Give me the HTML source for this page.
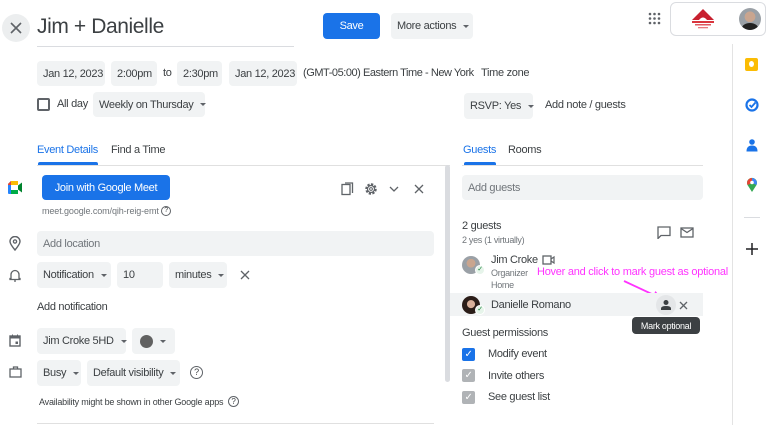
<!DOCTYPE html>
<html><head><meta charset="utf-8"><style>
*{box-sizing:border-box;margin:0;padding:0}
body{width:768px;height:425px;overflow:hidden;background:#fff;font-family:"Liberation Sans",Arial,sans-serif;color:#3c4043;position:relative;letter-spacing:-0.3px}
.a{position:absolute}
.box{position:absolute;background:#f1f3f4;border-radius:4px;font-size:11px;color:#3c4043;display:flex;align-items:center;padding-left:6px;white-space:nowrap}
.car{display:inline-block;width:0;height:0;border-left:3px solid transparent;border-right:3px solid transparent;border-top:3px solid #5f6368;margin-left:7px}
.t{position:absolute;font-size:11px;white-space:nowrap}
.ic{position:absolute}
</style></head><body>
<div class="a" style="left:2px;top:14px;width:28px;height:28px;border-radius:50%;background:#eceeef"></div>
<svg class="ic" style="left:10px;top:22px" width="12" height="12"><path d="M1 1L11 11M11 1L1 11" stroke="#5f6368" stroke-width="1.6"/></svg>
<div class="t" style="left:37px;top:15px;font-size:21px;color:#3c4043;letter-spacing:-0.4px">Jim + Danielle</div>
<div class="a" style="left:37px;top:46px;width:257px;height:1px;background:#dadce0"></div>
<div class="a" style="left:323px;top:13px;width:57px;height:26px;background:#1a73e8;border-radius:4px;color:#fff;font-size:11px;display:flex;align-items:center;justify-content:center">Save</div>
<div class="box" style="left:391px;top:13px;width:82px;height:26px">More actions<span class="car"></span></div>
<svg class="ic" style="left:648px;top:12px" width="13" height="13"><g fill="#5f6368"><circle cx="2" cy="2" r="1.3"/><circle cx="6.5" cy="2" r="1.3"/><circle cx="11" cy="2" r="1.3"/><circle cx="2" cy="6.5" r="1.3"/><circle cx="6.5" cy="6.5" r="1.3"/><circle cx="11" cy="6.5" r="1.3"/><circle cx="2" cy="11" r="1.3"/><circle cx="6.5" cy="11" r="1.3"/><circle cx="11" cy="11" r="1.3"/></g></svg>
<div class="a" style="left:670px;top:2px;width:96px;height:34px;border:1px solid #dadce0;border-radius:6px"></div>
<svg class="ic" style="left:691px;top:8px" width="24" height="24"><path d="M12 1L23 12H1Z" fill="#c8202f"/><path d="M8 12Q12 7 16 12Z" fill="#fff"/><rect x="1" y="13" width="22" height="2" fill="#d9363e"/><rect x="4" y="16" width="16" height="1.5" fill="#e05a60"/><rect x="7" y="19" width="10" height="1.3" fill="#e87a80"/></svg>
<div class="a" style="left:739px;top:8px;width:22px;height:22px;border-radius:50%;background:radial-gradient(circle at 50% 40%,#c9a58f 0 30%,#9aa0a6 32%);overflow:hidden"><div class="a" style="left:3px;top:15px;width:16px;height:10px;border-radius:50%;background:#222"></div></div>
<div class="a" style="left:732px;top:44px;width:1px;height:381px;background:#e3e3e3"></div>
<div class="a" style="left:745px;top:58px;width:13px;height:13px;background:#fbbc04;border-radius:2px"><div class="a" style="left:4px;top:3px;width:5px;height:6px;background:#fff;border-radius:50%"></div></div>
<svg class="ic" style="left:745px;top:98px" width="14" height="14"><circle cx="7" cy="7" r="5.5" fill="none" stroke="#1a73e8" stroke-width="2.2"/><path d="M4.5 7l2 2 4-4.5" fill="none" stroke="#1a73e8" stroke-width="1.8"/></svg>
<svg class="ic" style="left:745px;top:138px" width="14" height="14"><circle cx="7" cy="4" r="2.8" fill="#1a73e8"/><path d="M1.5 13.5Q1.5 7.5 7 7.5T12.5 13.5Z" fill="#1a73e8"/></svg>
<svg class="ic" style="left:746px;top:177px" width="12" height="16"><path d="M6 15L1.5 8A5 5 0 1 1 10.5 8Z" fill="#34a853"/><path d="M1.5 8A5 5 0 0 1 6 1V6Z" fill="#ea4335"/><path d="M6 1A5 5 0 0 1 10.5 8L6 6Z" fill="#4285f4"/><circle cx="6" cy="5.5" r="1.8" fill="#fff"/></svg>
<div class="a" style="left:744px;top:217px;width:16px;height:1px;background:#dadce0"></div>
<svg class="ic" style="left:746px;top:243px" width="12" height="12"><path d="M6 0V12M0 6H12" stroke="#202124" stroke-width="1.5"/></svg>
<div class="box" style="left:37px;top:61px;width:68px;height:25px">Jan 12, 2023</div>
<div class="box" style="left:111px;top:61px;width:46px;height:25px">2:00pm</div>
<div class="t" style="left:163px;top:67px">to</div>
<div class="box" style="left:177px;top:61px;width:45px;height:25px">2:30pm</div>
<div class="box" style="left:229px;top:61px;width:68px;height:25px">Jan 12, 2023</div>
<div class="t" style="left:303px;top:67px;letter-spacing:-0.45px">(GMT-05:00) Eastern Time - New York</div>
<div class="t" style="left:481px;top:67px">Time zone</div>
<div class="a" style="left:37px;top:98px;width:13px;height:13px;border:2px solid #5f6368;border-radius:2px"></div>
<div class="t" style="left:57px;top:98px">All day</div>
<div class="box" style="left:93px;top:92px;width:112px;height:25px">Weekly on Thursday<span class="car"></span></div>
<div class="box" style="left:464px;top:93px;width:69px;height:26px">RSVP: Yes<span class="car"></span></div>
<div class="t" style="left:545px;top:99px">Add note / guests</div>
<div class="t" style="left:37px;top:144px;color:#1a73e8">Event Details</div>
<div class="t" style="left:111px;top:144px">Find a Time</div>
<div class="a" style="left:38px;top:162px;width:60px;height:3px;background:#1a73e8;border-radius:2px 2px 0 0"></div>
<div class="a" style="left:37px;top:165px;width:413px;height:1px;background:#e0e0e0"></div>
<div class="t" style="left:463px;top:144px;color:#1a73e8">Guests</div>
<div class="t" style="left:508px;top:144px">Rooms</div>
<div class="a" style="left:464px;top:162px;width:32px;height:3px;background:#1a73e8;border-radius:2px 2px 0 0"></div>
<div class="a" style="left:462px;top:165px;width:241px;height:1px;background:#e0e0e0"></div>
<div class="a" style="left:445px;top:165px;width:5px;height:217px;background:#dadce0;border-radius:3px"></div>
<svg class="ic" style="left:8px;top:181px" width="15" height="13"><path d="M0 3L3 0H10V4.5L14 1.5V11.5L10 8.5V13H3Z" fill="#00832d"/><path d="M3 0H10V4H3Z" fill="#fbbc04"/><path d="M0 3L3 0V4H0Z" fill="#ea4335"/><path d="M0 4H3V13H1Q0 13 0 12Z" fill="#2684fc"/><path d="M3 9H10V13H3Z" fill="#00ac47"/><rect x="3" y="4" width="7" height="5" fill="#fff"/></svg>
<div class="a" style="left:42px;top:175px;width:128px;height:25px;background:#1a73e8;border-radius:4px;color:#fff;font-size:11px;display:flex;align-items:center;justify-content:center;white-space:nowrap">Join with Google Meet</div>
<svg class="ic" style="left:341px;top:182px" width="13" height="14"><rect x="1" y="2.5" width="8" height="10" fill="none" stroke="#5f6368" stroke-width="1.3"/><path d="M4 1H11.5V11" fill="none" stroke="#5f6368" stroke-width="1.3"/></svg>
<svg class="ic" style="left:364px;top:182px" width="14" height="14"><circle cx="7" cy="7" r="4.5" fill="none" stroke="#5f6368" stroke-width="2.5" stroke-dasharray="2.2 1.3"/><circle cx="7" cy="7" r="3.5" fill="none" stroke="#5f6368" stroke-width="1.2"/><circle cx="7" cy="7" r="1.4" fill="none" stroke="#5f6368"/></svg>
<svg class="ic" style="left:389px;top:186px" width="10" height="6"><path d="M1 1L5 5L9 1" fill="none" stroke="#5f6368" stroke-width="1.3"/></svg>
<svg class="ic" style="left:414px;top:184px" width="10" height="10"><path d="M1 1L9 9M9 1L1 9" stroke="#5f6368" stroke-width="1.3"/></svg>
<div class="t" style="left:42px;top:206px;font-size:9px;color:#70757a;letter-spacing:-0.1px">meet.google.com/qih-reig-emt</div>
<div class="a" style="left:161px;top:206px;width:10px;height:10px;border:1px solid #5f6368;border-radius:50%;font-size:7px;text-align:center;line-height:8px">?</div>
<svg class="ic" style="left:9px;top:236px" width="12" height="15"><path d="M6 14Q1 8 1 5.5A5 5 0 0 1 11 5.5Q11 8 6 14Z" fill="none" stroke="#5f6368" stroke-width="1.4"/><circle cx="6" cy="5.5" r="1.6" fill="none" stroke="#5f6368" stroke-width="1.3"/></svg>
<div class="box" style="left:37px;top:231px;width:397px;height:25px;color:#70757a">Add location</div>
<svg class="ic" style="left:9px;top:268px" width="12" height="14"><path d="M2 10.5V6.5A4 4 0 0 1 10 6.5V10.5H11V11.5H1V10.5Z" fill="none" stroke="#5f6368" stroke-width="1.3"/><path d="M5 13H7" stroke="#5f6368" stroke-width="1.3"/></svg>
<div class="box" style="left:37px;top:262px;width:74px;height:26px">Notification<span class="car"></span></div>
<div class="box" style="left:117px;top:262px;width:46px;height:26px">10</div>
<div class="box" style="left:169px;top:262px;width:58px;height:26px">minutes<span class="car"></span></div>
<svg class="ic" style="left:240px;top:270px" width="10" height="10"><path d="M1 1L9 9M9 1L1 9" stroke="#5f6368" stroke-width="1.3"/></svg>
<div class="t" style="left:37px;top:301px">Add notification</div>
<svg class="ic" style="left:9px;top:334px" width="12" height="13"><rect x="1" y="2" width="10" height="10" fill="none" stroke="#5f6368" stroke-width="1.4"/><rect x="1" y="2" width="10" height="2.5" fill="#5f6368"/><path d="M3.5 0.5V2.5M8.5 0.5V2.5" stroke="#5f6368"/><rect x="6.5" y="7.5" width="2.5" height="2.5" fill="#5f6368"/></svg>
<div class="box" style="left:37px;top:328px;width:89px;height:26px">Jim Croke 5HD<span class="car"></span></div>
<div class="box" style="left:132px;top:328px;width:43px;height:26px;padding-left:8px"><span style="display:inline-block;width:13px;height:13px;border-radius:50%;background:#616161"></span><span class="car"></span></div>
<svg class="ic" style="left:9px;top:366px" width="13" height="12"><rect x="1" y="3" width="11" height="8" fill="none" stroke="#5f6368" stroke-width="1.3"/><path d="M4.5 3V1H8.5V3" fill="none" stroke="#5f6368" stroke-width="1.3"/></svg>
<div class="box" style="left:37px;top:360px;width:44px;height:26px">Busy<span class="car"></span></div>
<div class="box" style="left:87px;top:360px;width:93px;height:26px">Default visibility<span class="car"></span></div>
<div class="a" style="left:190px;top:366px;width:13px;height:13px;border:1.3px solid #5f6368;border-radius:50%;font-size:9px;text-align:center;line-height:11px">?</div>
<div class="t" style="left:39px;top:397px;font-size:9px;letter-spacing:-0.2px">Availability might be shown in other Google apps</div>
<div class="a" style="left:228px;top:396px;width:11px;height:11px;border:1px solid #5f6368;border-radius:50%;font-size:8px;text-align:center;line-height:9px">?</div>
<div class="a" style="left:37px;top:423px;width:397px;height:1px;background:#e0e0e0"></div>
<div class="box" style="left:462px;top:175px;width:241px;height:25px;color:#70757a">Add guests</div>
<div class="t" style="left:462px;top:220px">2 guests</div>
<div class="t" style="left:462px;top:235px;font-size:9px;color:#70757a">2 yes (1 virtually)</div>
<svg class="ic" style="left:657px;top:226px" width="14" height="13"><path d="M1 1H13V9.5H4L1 12.5Z" fill="none" stroke="#5f6368" stroke-width="1.3"/></svg>
<svg class="ic" style="left:680px;top:227px" width="14" height="11"><rect x="1" y="1" width="12" height="9" fill="none" stroke="#5f6368" stroke-width="1.3"/><path d="M1 1.5L7 5.5L13 1.5" fill="none" stroke="#5f6368" stroke-width="1.3"/></svg>
<div class="a" style="left:462px;top:256px;width:18px;height:18px;border-radius:50%;background:radial-gradient(circle at 50% 40%,#c9a58f 0 30%,#9aa0a6 32%)"></div>
<div class="a" style="left:475px;top:265px;width:10px;height:10px;border-radius:50%;background:#e6f4ea;border:1px solid #fff;color:#188038;font-size:7px;line-height:8px;text-align:center">✓</div>
<div class="t" style="left:491px;top:254px">Jim Croke</div>
<svg class="ic" style="left:542px;top:255px" width="13" height="10"><rect x="1" y="1" width="8" height="8" fill="none" stroke="#5f6368" stroke-width="1.3"/><path d="M9 4L12 2V8L9 6" fill="none" stroke="#5f6368" stroke-width="1.2"/></svg>
<div class="t" style="left:491px;top:268px;font-size:9px;color:#70757a">Organizer</div>
<div class="t" style="left:491px;top:280px;font-size:9px;color:#70757a">Home</div>
<div class="t" style="left:537px;top:266px;font-size:11px;color:#ff33ff;letter-spacing:-0.25px">Hover and click to mark guest as optional</div>
<svg class="ic" style="left:620px;top:278px" width="48" height="26"><path d="M4 3L36 18" stroke="#ff33ff" stroke-width="1.8"/><path d="M43 22L31 21.5L35.5 13Z" fill="#ff33ff"/></svg>
<div class="a" style="left:450px;top:293px;width:253px;height:23px;background:#f1f3f4"></div>
<div class="a" style="left:462px;top:296px;width:18px;height:18px;border-radius:50%;background:radial-gradient(circle at 50% 45%,#d9b09a 0 28%,#2b1d18 32%)"></div>
<div class="a" style="left:475px;top:305px;width:10px;height:10px;border-radius:50%;background:#e6f4ea;border:1px solid #fff;color:#188038;font-size:7px;line-height:8px;text-align:center">✓</div>
<div class="t" style="left:491px;top:299px">Danielle Romano</div>
<div class="a" style="left:656px;top:295px;width:20px;height:20px;border-radius:50%;background:#e4e6e8"></div>
<svg class="ic" style="left:660px;top:299px" width="12" height="12"><circle cx="6" cy="3.5" r="2.5" fill="#3c4043"/><path d="M1 11V9.5Q1 7 6 7T11 9.5V11Z" fill="#3c4043"/></svg>
<svg class="ic" style="left:679px;top:301px" width="9" height="9"><path d="M1 1L8 8M8 1L1 8" stroke="#5f6368" stroke-width="1.3"/></svg>
<div class="a" style="left:632px;top:317px;width:68px;height:17px;background:#3c4043;border-radius:4px;color:#fff;font-size:9px;display:flex;align-items:center;justify-content:center;white-space:nowrap">Mark optional</div>
<div class="t" style="left:462px;top:327px">Guest permissions</div>
<div class="a" style="left:462px;top:348px;width:13px;height:13px;background:#1a73e8;border-radius:2px;color:#fff;font-size:10px;line-height:13px;text-align:center">✓</div>
<div class="t" style="left:488px;top:348px">Modify event</div>
<div class="a" style="left:462px;top:369px;width:13px;height:13px;background:#b0b3b6;border-radius:2px;color:#fff;font-size:10px;line-height:13px;text-align:center">✓</div>
<div class="t" style="left:488px;top:370px">Invite others</div>
<div class="a" style="left:462px;top:391px;width:13px;height:13px;background:#b0b3b6;border-radius:2px;color:#fff;font-size:10px;line-height:13px;text-align:center">✓</div>
<div class="t" style="left:488px;top:391px">See guest list</div>
</body></html>
